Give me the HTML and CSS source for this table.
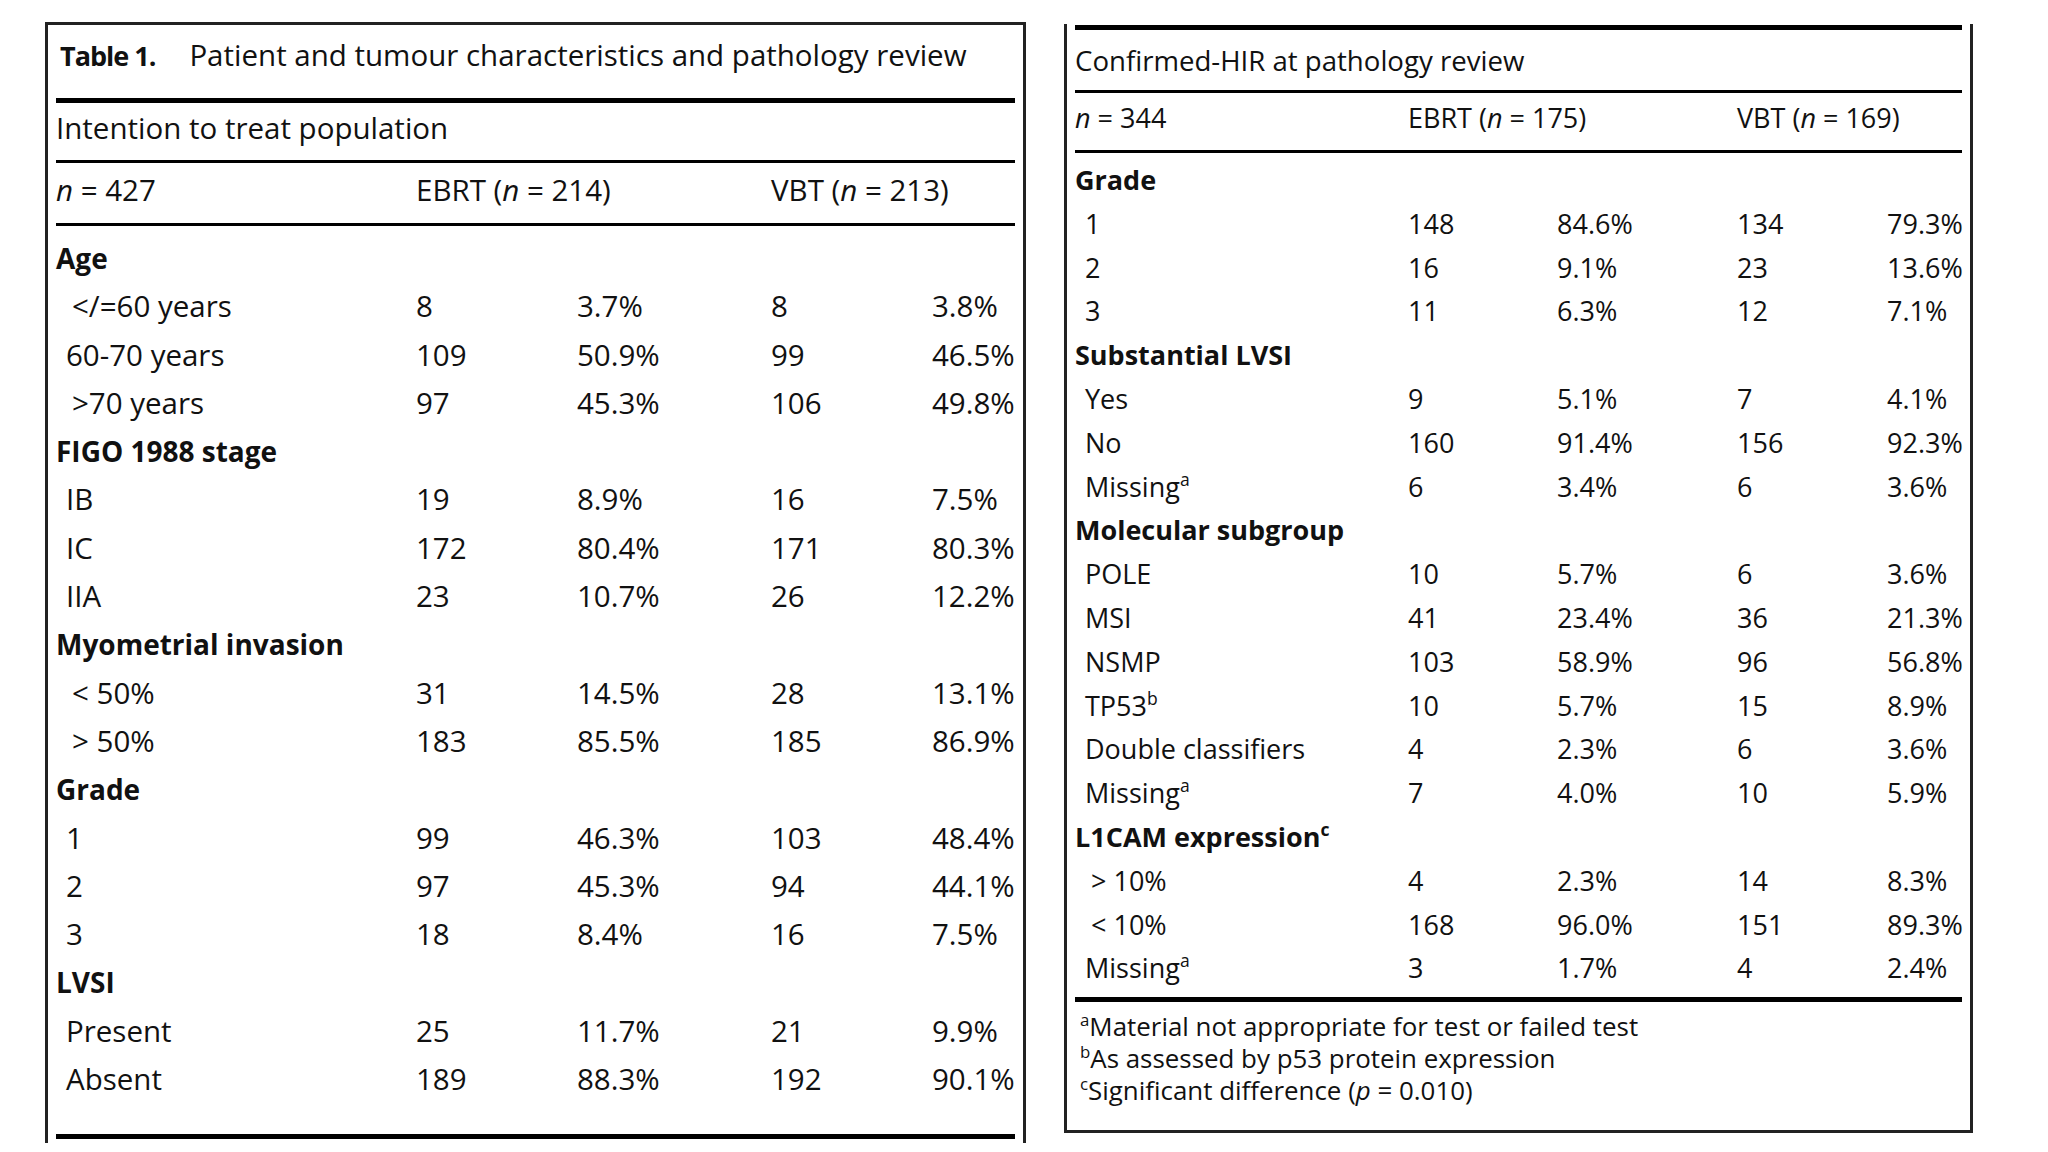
FILE: index.html
```html
<!DOCTYPE html>
<html lang="en">
<head>
<meta charset="utf-8">
<title>Table 1</title>
<link rel="stylesheet" href="styles.css">
</head>
<body>
<div class="page">
  <section class="panel left">
    <div class="title"><span class="tno">Table 1.</span><span>Patient and tumour characteristics and pathology review</span></div>
    <div class="subtitle">Intention to treat population</div>
    <div class="row head"><span><i>n</i> = 427</span><span class="span2">EBRT (<i>n</i> = 214)</span><span class="span2">VBT (<i>n</i> = 213)</span></div>
    <div class="body">
      <div class="row"><span class="grp">Age</span></div>
      <div class="row"><span class="sub sp">&lt;/=60 years</span><span>8</span><span>3.7%</span><span>8</span><span>3.8%</span></div>
      <div class="row"><span class="sub">60-70 years</span><span>109</span><span>50.9%</span><span>99</span><span>46.5%</span></div>
      <div class="row"><span class="sub sp">&gt;70 years</span><span>97</span><span>45.3%</span><span>106</span><span>49.8%</span></div>
      <div class="row"><span class="grp">FIGO 1988 stage</span></div>
      <div class="row"><span class="sub">IB</span><span>19</span><span>8.9%</span><span>16</span><span>7.5%</span></div>
      <div class="row"><span class="sub">IC</span><span>172</span><span>80.4%</span><span>171</span><span>80.3%</span></div>
      <div class="row"><span class="sub">IIA</span><span>23</span><span>10.7%</span><span>26</span><span>12.2%</span></div>
      <div class="row"><span class="grp">Myometrial invasion</span></div>
      <div class="row"><span class="sub sp">&lt; 50%</span><span>31</span><span>14.5%</span><span>28</span><span>13.1%</span></div>
      <div class="row"><span class="sub sp">&gt; 50%</span><span>183</span><span>85.5%</span><span>185</span><span>86.9%</span></div>
      <div class="row"><span class="grp">Grade</span></div>
      <div class="row"><span class="sub">1</span><span>99</span><span>46.3%</span><span>103</span><span>48.4%</span></div>
      <div class="row"><span class="sub">2</span><span>97</span><span>45.3%</span><span>94</span><span>44.1%</span></div>
      <div class="row"><span class="sub">3</span><span>18</span><span>8.4%</span><span>16</span><span>7.5%</span></div>
      <div class="row"><span class="grp">LVSI</span></div>
      <div class="row"><span class="sub">Present</span><span>25</span><span>11.7%</span><span>21</span><span>9.9%</span></div>
      <div class="row"><span class="sub">Absent</span><span>189</span><span>88.3%</span><span>192</span><span>90.1%</span></div>
    </div>
  </section>

  <section class="panel right">
    <div class="title">Confirmed-HIR at pathology review</div>
    <div class="row head"><span><i>n</i> = 344</span><span class="span2">EBRT (<i>n</i> = 175)</span><span class="span2">VBT (<i>n</i> = 169)</span></div>
    <div class="body">
      <div class="row"><span class="grp">Grade</span></div>
      <div class="row"><span class="sub">1</span><span>148</span><span>84.6%</span><span>134</span><span>79.3%</span></div>
      <div class="row"><span class="sub">2</span><span>16</span><span>9.1%</span><span>23</span><span>13.6%</span></div>
      <div class="row"><span class="sub">3</span><span>11</span><span>6.3%</span><span>12</span><span>7.1%</span></div>
      <div class="row"><span class="grp">Substantial LVSI</span></div>
      <div class="row"><span class="sub">Yes</span><span>9</span><span>5.1%</span><span>7</span><span>4.1%</span></div>
      <div class="row"><span class="sub">No</span><span>160</span><span>91.4%</span><span>156</span><span>92.3%</span></div>
      <div class="row"><span class="sub">Missing<sup>a</sup></span><span>6</span><span>3.4%</span><span>6</span><span>3.6%</span></div>
      <div class="row"><span class="grp">Molecular subgroup</span></div>
      <div class="row"><span class="sub">POLE</span><span>10</span><span>5.7%</span><span>6</span><span>3.6%</span></div>
      <div class="row"><span class="sub">MSI</span><span>41</span><span>23.4%</span><span>36</span><span>21.3%</span></div>
      <div class="row"><span class="sub">NSMP</span><span>103</span><span>58.9%</span><span>96</span><span>56.8%</span></div>
      <div class="row"><span class="sub">TP53<sup>b</sup></span><span>10</span><span>5.7%</span><span>15</span><span>8.9%</span></div>
      <div class="row"><span class="sub">Double classifiers</span><span>4</span><span>2.3%</span><span>6</span><span>3.6%</span></div>
      <div class="row"><span class="sub">Missing<sup>a</sup></span><span>7</span><span>4.0%</span><span>10</span><span>5.9%</span></div>
      <div class="row"><span class="grp">L1CAM expression<sup>c</sup></span></div>
      <div class="row"><span class="sub sp">&gt; 10%</span><span>4</span><span>2.3%</span><span>14</span><span>8.3%</span></div>
      <div class="row"><span class="sub sp">&lt; 10%</span><span>168</span><span>96.0%</span><span>151</span><span>89.3%</span></div>
      <div class="row"><span class="sub">Missing<sup>a</sup></span><span>3</span><span>1.7%</span><span>4</span><span>2.4%</span></div>
    </div>
    <div class="notes">
      <p><sup>a</sup>Material not appropriate for test or failed test</p>
      <p><sup>b</sup>As assessed by p53 protein expression</p>
      <p><sup>c</sup>Significant difference (<i>p</i> = 0.010)</p>
    </div>
  </section>
</div>
</body>
</html>
```
FILE: styles.css
```css
* { box-sizing: border-box; }

html, body {
  margin: 0;
  padding: 0;
  background: #ffffff;
}

body {
  font-family: "Open Sans", "Noto Sans", sans-serif;
  color: #111111;
}

.page {
  display: flex;
  align-items: flex-start;
  gap: 38px;
  padding-left: 45px;
}

.panel {
  border-color: #222222;
  border-style: solid;
}

/* ---------- left panel ---------- */
.left {
  --cols: 360px 161px 194px 161px 1fr;
  margin-top: 22px;
  width: 981px;
  border-width: 3px 3px 0 3px;
  padding: 0 8px 4px 8px;
  font-size: 29.5px;
}

.left .title {
  line-height: 60px;
  padding: 0 0 12px 4px;
  border-bottom: 5px solid #000;
  font-size: 29.5px;
  white-space: nowrap;
}

.tno {
  font-size: 27px;
  font-weight: 700;
  letter-spacing: -1px;
  margin-right: 34px;
}

.left .subtitle {
  line-height: 50px;
  padding-bottom: 7px;
  border-bottom: 3px solid #000;
}

.left .head {
  line-height: 54px;
  padding-bottom: 6px;
  border-bottom: 3px solid #000;
}

.left .body {
  padding: 8px 0 30.6px;
  border-bottom: 5px solid #000;
}

.left .body .row {
  height: 48.3px;
  line-height: 48.3px;
}

.left .grp {
  font-size: 28px;
}

/* ---------- right panel ---------- */
.right {
  --cols: 333px 149px 180px 150px 1fr;
  margin-top: 24px;
  width: 909px;
  border-width: 0 3px 3px 3px;
  padding: 1px 8px 0 8px;
  font-size: 27px;
}

.right .title {
  border-top: 5px solid #000;
  line-height: 60px;
  font-size: 27.6px;
  border-bottom: 3px solid #000;
}

.right .head {
  line-height: 50px;
  padding-bottom: 7px;
  border-bottom: 3px solid #000;
}

.right .body {
  padding: 5px 0 7px;
  border-bottom: 5px solid #000;
}

.right .body .row {
  height: 43.8px;
  line-height: 43.8px;
}

/* ---------- rows ---------- */
.row {
  display: grid;
  grid-template-columns: var(--cols);
  white-space: nowrap;
}

.row .span2 {
  grid-column: span 2;
}

.grp {
  grid-column: 1 / -1;
  font-weight: 700;
}

.sub {
  padding-left: 10px;
}

.sub.sp {
  padding-left: 16px;
}

sup {
  font-size: 0.65em;
  line-height: 0;
  vertical-align: 0.6em;
}

.notes {
  padding: 8px 0 24px 5px;
  font-size: 25.9px;
  line-height: 32px;
}

.notes p {
  margin: 0;
}

.notes sup {
  font-size: 0.65em;
}
```
